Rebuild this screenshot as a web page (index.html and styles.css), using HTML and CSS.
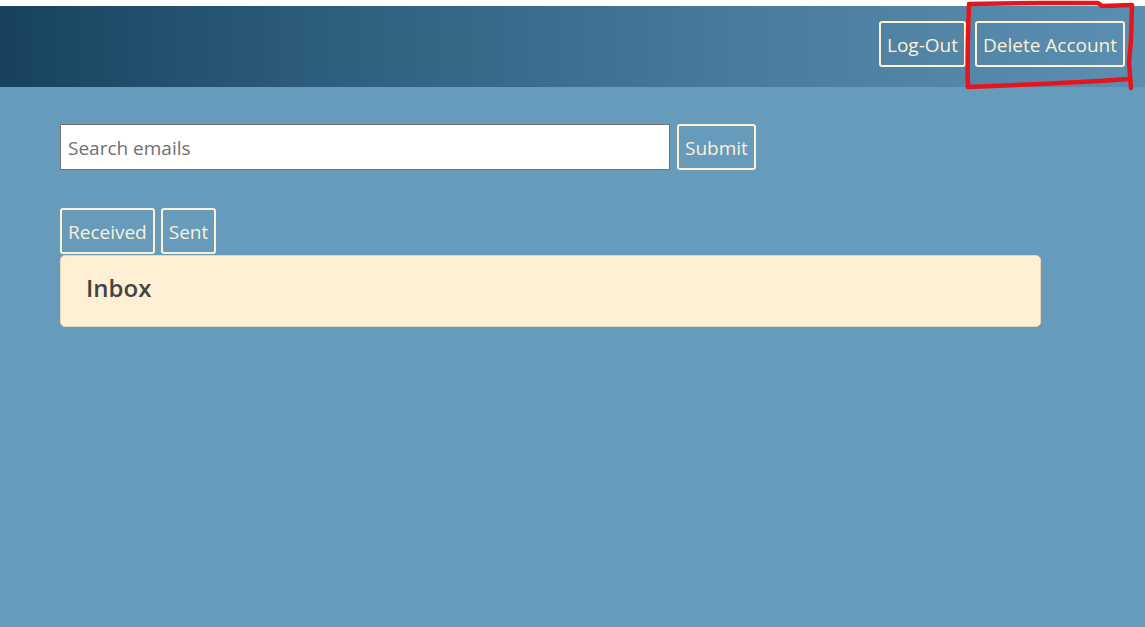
FILE: index.html
```html
<!DOCTYPE html>
<html>
<head>
<meta charset="utf-8">
<link rel="stylesheet" href="styles.css">
</head>
<body>
<header class="topbar">
  <nav class="topnav">
    <button class="btn">Log-Out</button>
    <button class="btn">Delete Account</button>
  </nav>
</header>
<main class="content">
  <form class="search">
    <input class="search-input" type="text" placeholder="Search emails">
    <button class="btn" type="button">Submit</button>
  </form>
  <div class="tabs">
    <button class="btn">Received</button>
    <button class="btn">Sent</button>
  </div>
  <section class="inbox">
    <h2 class="inbox-title">Inbox</h2>
  </section>
</main>
<svg class="annotation" width="180" height="95" viewBox="0 0 180 95">
  <path d="M9 5 C 8 30, 7 60, 8 87 L 80 84 L 140 81 L 168 79 M9 4 L 80 3 L 138 3 L 142 6 L 172 5 L 171 40 L 169 62 L 171 88" fill="none" stroke="#e5151b" stroke-width="4.5" stroke-linecap="round" stroke-linejoin="round"/>
</svg>
</body>
</html>
```
FILE: styles.css
```css
html {
  background: #ffffff;
}
html, body {
  margin: 0;
  padding: 0;
}
body {
  font-family: "Open Sans", "Noto Sans", sans-serif;
  min-height: 627px;
  padding-top: 6px;
  background: #669bbc;
  background-clip: content-box;
  position: relative;
  box-sizing: border-box;
}
.topbar {
  height: 81px;
  box-sizing: border-box;
  background: linear-gradient(to right, #16425e 0%, #2f5f7f 30%, #4a7b9c 65%, #5b8fb1 100%);
  display: flex;
  justify-content: flex-end;
  align-items: flex-start;
  padding: 15px 20px 0 0;
}
.topnav {
  display: flex;
  gap: 9px;
}
.btn {
  font-family: "Open Sans", "Noto Sans", sans-serif;
  font-size: 19px;
  color: #fdf0d5;
  background: transparent;
  border: 2px solid #fdf0d5;
  border-radius: 3px;
  height: 46px;
  padding: 2px 6px 0 6px;
  cursor: pointer;
}
.content {
  padding: 37px 60px 0 60px;
}
.search {
  display: flex;
  gap: 7px;
  margin: 0;
}
.search-input {
  width: 610px;
  height: 46px;
  box-sizing: border-box;
  border: 1px solid #767676;
  padding: 2px 7px 0 7px;
  font-family: "Open Sans", "Noto Sans", sans-serif;
  font-size: 19px;
  color: #333;
  background: #fff;
}
.search-input::placeholder {
  color: #707070;
}
.tabs {
  display: flex;
  gap: 6px;
  margin-top: 38px;
}
.inbox {
  width: 981px;
  box-sizing: border-box;
  background: #fef0d5;
  border: 1px solid #e6d6b8;
  border-radius: 5px;
  height: 72px;
  margin-top: 1px;
  padding: 0 25px;
  display: flex;
  align-items: center;
}
.inbox-title {
  margin: 0;
  font-size: 24px;
  font-weight: 600;
  color: #444444;
  position: relative;
  top: -4px;
}
.annotation {
  position: absolute;
  left: 960px;
  top: 0;
}
```
